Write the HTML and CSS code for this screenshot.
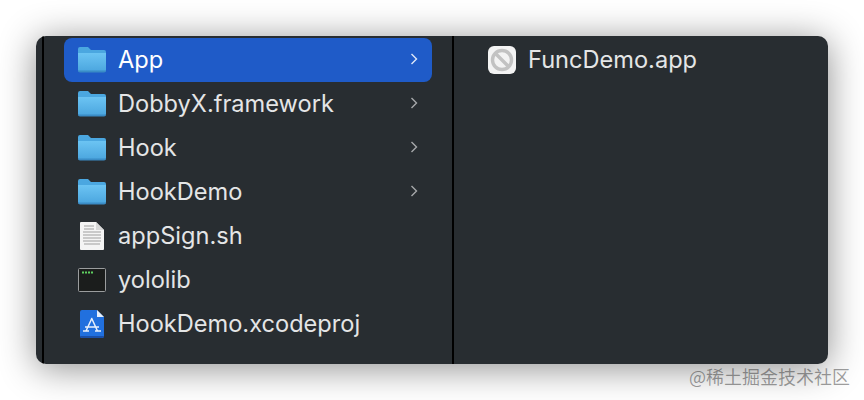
FILE: index.html
```html
<!DOCTYPE html>
<html lang="en">
<head>
    <meta charset="UTF-8">
    <meta name="viewport" content="width=device-width, initial-scale=1.0">
    <title>Finder</title>
    <link rel="stylesheet" href="styles.css">
</head>
<body>
    <div class="window">
        <div class="sliver"></div>
        <div class="column column-list">
            <div class="row selected">
                <svg class="icon" viewBox="0 0 28 30"><use href="#folder"/></svg>
                <span class="name">App</span>
                <svg class="chevron" viewBox="0 0 8 12"><path d="M1.5 1l5 5-5 5"/></svg>
            </div>
            <div class="row">
                <svg class="icon" viewBox="0 0 28 30"><use href="#folder"/></svg>
                <span class="name">DobbyX.framework</span>
                <svg class="chevron" viewBox="0 0 8 12"><path d="M1.5 1l5 5-5 5"/></svg>
            </div>
            <div class="row">
                <svg class="icon" viewBox="0 0 28 30"><use href="#folder"/></svg>
                <span class="name">Hook</span>
                <svg class="chevron" viewBox="0 0 8 12"><path d="M1.5 1l5 5-5 5"/></svg>
            </div>
            <div class="row">
                <svg class="icon" viewBox="0 0 28 30"><use href="#folder"/></svg>
                <span class="name">HookDemo</span>
                <svg class="chevron" viewBox="0 0 8 12"><path d="M1.5 1l5 5-5 5"/></svg>
            </div>
            <div class="row">
                <svg class="icon" viewBox="0 0 28 30">
                    <path d="M3 1h15l8 8v19a1 1 0 0 1-1 1H3a1 1 0 0 1-1-1V2a1 1 0 0 1 1-1z" fill="#f4f4f4"/>
                    <path d="M18 1l8 8h-8z" fill="#d8d8d8"/>
                    <path d="M6 5h10M6 8h10M5 11h18M5 14h18M5 17h18M5 20h18M6 23h16" stroke="#c9c9c9" stroke-width="2"/>
                </svg>
                <span class="name">appSign.sh</span>
            </div>
            <div class="row">
                <svg class="icon" viewBox="0 0 28 30">
                    <rect x=".5" y="3.5" width="27" height="23" rx="1" fill="#1b1d1c" stroke="#9b9d9e"/>
                    <path d="M4 7.5h2M7 7.5h2M10 7.5h2M13 7.5h2" stroke="#5fd05f" stroke-width="1.8"/>
                </svg>
                <span class="name">yololib</span>
            </div>
            <div class="row">
                <svg class="icon" viewBox="0 0 28 30">
                    <path d="M4 1h15l7 7v19a2 2 0 0 1-2 2H4a2 2 0 0 1-2-2V3a2 2 0 0 1 2-2z" fill="#2170de"/>
                    <path d="M2 27h24a2 2 0 0 1-2 2H4a2 2 0 0 1-2-2z" fill="#1a4fa8"/>
                    <path d="M19 1l7 7h-7z" fill="#e6effa"/>
                    <path d="M14 9l-6 13M13.5 9l6 13M7 18h14M5 22h6M17 22h6" fill="none" stroke="#e8f0fb" stroke-width="1.5"/>
                </svg>
                <span class="name">HookDemo.xcodeproj</span>
            </div>
        </div>
        <div class="column column-detail">
            <div class="row">
                <svg class="icon" viewBox="0 0 28 30">
                    <rect y="1" width="28" height="28" rx="6" fill="#f3f3f3"/>
                    <circle cx="14" cy="15" r="9.5" fill="none" stroke="#c2c2c2" stroke-width="3.4"/>
                    <path d="M7.5 8.5l13 13" stroke="#c2c2c2" stroke-width="3.4"/>
                </svg>
                <span class="name">FuncDemo.app</span>
            </div>
        </div>
    </div>
    <div class="watermark">@稀土掘金技术社区</div>

    <svg class="defs" width="0" height="0">
        <defs>
            <linearGradient id="folder-body" x1="0" y1="0" x2="0" y2="1">
                <stop offset="0" stop-color="#6cc4f3"/>
                <stop offset="1" stop-color="#4aa5de"/>
            </linearGradient>
            <g id="folder">
                <path d="M2 2h8l3 3h13a2 2 0 0 1 2 2v4H0V4a2 2 0 0 1 2-2z" fill="#4ba7e0"/>
                <path d="M0 8h28v17a2 2 0 0 1-2 2H2a2 2 0 0 1-2-2z" fill="url(#folder-body)"/>
                <path d="M0 25.5h28a2 2 0 0 1-2 2H2a2 2 0 0 1-2-2z" fill="#3a8cc6"/>
            </g>
        </defs>
    </svg>
</body>
</html>
```

FILE: styles.css
```css
body {
    position: relative;
    width: 864px;
    height: 400px;
    margin: 0;
    padding: 36px;
    box-sizing: border-box;
    background: #fff;
    font-family: "Inter", "Liberation Sans", sans-serif;
    overflow: hidden;
}

.window {
    display: flex;
    height: 328px;
    background: #282d31;
    border-radius: 10px;
    box-shadow: 0 4px 36px rgba(0, 0, 0, 0.45);
    overflow: hidden;
}

.sliver {
    width: 6px;
    flex: none;
    border-right: 2px solid #000;
}

.column {
    display: flex;
    flex-direction: column;
    padding-top: 2px;
}

.column-list {
    width: 410px;
    flex: none;
    padding-left: 20px;
    padding-right: 20px;
    box-sizing: border-box;
    border-right: 2px solid #000;
}

.column-detail {
    flex: 1;
    padding-left: 20px;
}

.row {
    display: flex;
    align-items: center;
    height: 44px;
    flex: none;
    padding-left: 14px;
    padding-right: 14px;
    color: #e4e5e6;
    font-size: 23.6px;
}

.selected {
    background: #1f5bc8;
    border-radius: 8px;
    color: #fff;
}

.icon {
    width: 28px;
    height: 30px;
    flex: none;
    margin-right: 12px;
}

.name {
    flex: 1;
    margin-bottom: 2px;
    white-space: nowrap;
}

.chevron {
    width: 8px;
    height: 12px;
    flex: none;
    margin-bottom: 2px;
    fill: none;
    stroke: #a6a8aa;
    stroke-width: 1.4;
}

.selected .chevron {
    stroke: #dfe7f7;
}

.watermark {
    position: absolute;
    right: 14px;
    bottom: 13px;
    color: rgba(0, 0, 0, 0.38);
    font-family: "Noto Sans CJK SC", sans-serif;
    font-size: 18px;
    line-height: 22px;
}

.defs {
    position: absolute;
}
```
